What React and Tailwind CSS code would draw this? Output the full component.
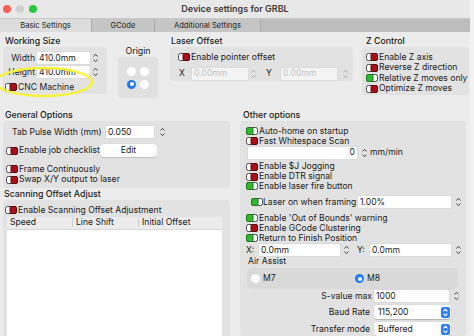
import React from 'react';

const FONT = { fontFamily: 'Inter, "Noto Sans", "Liberation Sans", sans-serif' };

function Toggle({ on }) {
  return (
    <svg width="12" height="8" viewBox="0 0 12 8" className="shrink-0">
      <rect x="0.5" y="0.5" width="11" height="7" rx="2" fill="#fff" stroke="#4a4a4a" />
      {on ? (
        <rect x="0.5" y="0.5" width="6.5" height="7" rx="1.5" fill="#2fb82f" stroke="#1f7a1f" />
      ) : (
        <rect x="5" y="0.5" width="6.5" height="7" rx="1.5" fill="#a8111a" stroke="#5a0a0d" />
      )}
    </svg>
  );
}

function Stepper({ faded }) {
  return (
    <svg width="7" height="12" viewBox="0 0 7 12" className="shrink-0" opacity={faded ? 0.35 : 1}>
      <polyline points="1.5,4.5 3.5,2.3 5.5,4.5" fill="none" stroke="#444" strokeWidth="1" />
      <polyline points="1.5,7.5 3.5,9.7 5.5,7.5" fill="none" stroke="#444" strokeWidth="1" />
    </svg>
  );
}

function BlueStepper() {
  return (
    <svg width="9" height="11" viewBox="0 0 9 11" className="shrink-0">
      <rect x="0" y="0" width="9" height="11" rx="2" fill="#2f7ef6" />
      <polyline points="2.5,4.3 4.5,2.3 6.5,4.3" fill="none" stroke="#fff" strokeWidth="1.1" />
      <polyline points="2.5,6.7 4.5,8.7 6.5,6.7" fill="none" stroke="#fff" strokeWidth="1.1" />
    </svg>
  );
}

function Check({ on, label, className = '' }) {
  return (
    <div className={`flex items-center h-[10.5px] gap-[1px] ${className}`}>
      <Toggle on={on} />
      <span className="whitespace-nowrap leading-none">{label}</span>
    </div>
  );
}

function Field({ value, className = '', faded, right }) {
  return (
    <div
      className={`h-[12px] flex items-center px-[2px] leading-none shadow-[0_0_0_0.5px_#d4d4d4] ${right ? 'justify-end' : ''} ${faded ? 'text-[#c2c2c2] bg-[#f4f4f4]' : 'bg-white'} ${className}`}
    >
      {value}
    </div>
  );
}

function Header({ children, className = '' }) {
  return <div className={`h-[12px] flex items-center font-medium text-[8.8px] leading-none text-[#1a1a1a] ${className}`}>{children}</div>;
}

export default function App() {
  return (
    <div className="relative w-[474px] h-[336px] overflow-hidden bg-[#f2f2f2] text-[8.6px] text-[#1a1a1a]" style={FONT}>
      <div className="w-[470px] h-[336px] bg-[#ececec]">
        {/* Title bar */}
        <div className="relative h-[18px] flex items-center bg-[#e8e8e8]">
          <div className="flex gap-[5px] pl-[3px]">
            <span className="w-[8px] h-[8px] rounded-full bg-[#fd5f57]" />
            <span className="w-[8px] h-[8px] rounded-full bg-[#cfcfcf]" />
            <span className="w-[8px] h-[8px] rounded-full bg-[#2ac73f]" />
          </div>
          <div className="absolute inset-0 flex items-center justify-center font-semibold text-[9px] text-[#3a3a3a]">
            Device settings for GRBL
          </div>
        </div>

        {/* Tabs */}
        <div className="h-[14px] flex bg-[#bdbdbd] border-t border-[#c9c9c9] text-[7.6px] leading-none">
          <div className="w-[91px] flex items-center justify-center bg-[#dddddd]">Basic Settings</div>
          <div className="w-[1px] bg-[#a9a9a9]" />
          <div className="w-[62px] flex items-center justify-center bg-[#c5c5c5]">GCode</div>
          <div className="w-[1px] bg-[#a9a9a9]" />
          <div className="w-[105px] flex items-center justify-center bg-[#c5c5c5]">Additional Settings</div>
          <div className="w-[1px] bg-[#a9a9a9]" />
        </div>

        {/* Top row */}
        <div className="flex pt-[3px]">
          {/* Working Size */}
          <div className="ml-[3px] w-[104px]">
            <Header className="pl-[2px]">Working Size</Header>
            <div className="h-[47px] rounded-[4px] bg-[#e2e2e2] flex flex-col pt-[5px] gap-[2px]">
              <div className="flex items-center h-[12px]">
                <span className="w-[34px] text-right pr-[2px]">Width</span>
                <Field value="410.0mm" className="w-[53px]" />
                <div className="ml-[2px]"><Stepper /></div>
              </div>
              <div className="flex items-center h-[12px]">
                <span className="w-[34px] text-right pr-[2px]">Height</span>
                <Field value="410.0mm" className="w-[53px]" />
                <div className="ml-[2px]"><Stepper /></div>
              </div>
              <Check on={false} label="CNC Machine" className="ml-[2px] mt-[2px]" />
            </div>
          </div>

          {/* Origin */}
          <div className="ml-[11px] w-[40px] flex flex-col">
            <div className="h-[12px] mt-[10px] flex items-center justify-center leading-none text-[8.8px]">Origin</div>
            <div className="h-[41px] rounded-[4px] bg-[#e0e0e0] grid grid-cols-2 content-center justify-center gap-x-[3px] gap-y-[4px] px-[9px]">
              <span className="w-[9px] h-[9px] rounded-full bg-white" />
              <span className="w-[9px] h-[9px] rounded-full bg-white" />
              <span className="w-[9px] h-[9px] rounded-full bg-[#1f7bf2] flex items-center justify-center">
                <span className="w-[4px] h-[4px] rounded-full bg-white" />
              </span>
              <span className="w-[9px] h-[9px] rounded-full bg-white" />
            </div>
          </div>

          {/* Laser Offset */}
          <div className="ml-[12px] w-[183px]">
            <Header className="pl-[1px]">Laser Offset</Header>
            <div className="h-[34px] rounded-[4px] bg-[#e2e2e2] flex flex-col pt-[5px] gap-[5px]">
              <Check on={false} label="Enable pointer offset" className="ml-[8px]" />
              <div className="flex items-center h-[12px]">
                <span className="w-[22px] text-center pl-[2px]">X</span>
                <Field value="0.00mm" faded className="w-[56px]" />
                <div className="ml-[2px]"><Stepper faded /></div>
                <span className="w-[24px] text-center">Y</span>
                <Field value="0.00mm" faded className="w-[56px]" />
                <div className="ml-[5px]"><Stepper faded /></div>
              </div>
            </div>
          </div>

          {/* Z Control */}
          <div className="ml-[9px] w-[107px]">
            <Header className="pl-[4px]">Z Control</Header>
            <div className="h-[48px] rounded-[4px] bg-[#e2e2e2] flex flex-col pt-[5px] pl-[4px]">
              <Check on={false} label="Enable Z axis" />
              <Check on={false} label="Reverse Z direction" />
              <Check on label="Relative Z moves only" />
              <Check on={false} label="Optimize Z moves" />
            </div>
          </div>
        </div>

        {/* Lower section */}
        <div className="flex mt-[11px]">
          {/* Left column */}
          <div className="ml-[3px] w-[227px] flex flex-col">
            <Header className="pl-[2px]">General Options</Header>
            <div className="h-[67px] rounded-[4px] bg-[#e2e2e2] flex flex-col pt-[5px]">
              <div className="flex items-center h-[12px]">
                <span className="ml-[9px] w-[94px] whitespace-nowrap">Tab Pulse Width (mm)</span>
                <Field value="0.050" className="w-[48px]" />
                <div className="ml-[5px]"><Stepper /></div>
              </div>
              <div className="flex items-center h-[13px] mt-[6px] ml-[3px]">
                <Toggle on={false} />
                <span className="w-[82px] pl-[1px] whitespace-nowrap">Enable job checklist</span>
                <div className="w-[57px] h-[13px] rounded-[4px] bg-white flex items-center justify-center shadow-[0_0.5px_1px_rgba(0,0,0,0.15)]">Edit</div>
              </div>
              <Check on={false} label="Frame Continuously" className="ml-[3px] mt-[7px]" />
              <Check on={false} label="Swap X/Y output to laser" className="ml-[3px]" />
            </div>

            <Header className="pl-[1px]">Scanning Offset Adjust</Header>
            <div className="h-[140px] rounded-[4px] bg-[#e2e2e2] flex flex-col pt-[5px]">
              <Check on={false} label="Enable Scanning Offset Adjustment" className="ml-[2px]" />
              <div className="ml-[4px] w-[215px] mt-[1px] flex-1 bg-white flex flex-col">
                <div className="h-[13px] flex items-center bg-[#ececec] border-b border-[#d8d8d8] leading-none">
                  <span className="w-[66px] pl-[3px] border-r border-[#cfcfcf]">Speed</span>
                  <span className="w-[66px] pl-[3px] border-r border-[#cfcfcf]">Line Shift</span>
                  <span className="pl-[3px]">Initial Offset</span>
                </div>
              </div>
            </div>
          </div>

          {/* Right column: Other options */}
          <div className="ml-[10px] w-[226px] flex flex-col">
            <Header className="pl-[3px]">Other options</Header>
            <div className="h-[215px] rounded-[4px] bg-[#e2e2e2] flex flex-col pt-[5px] pl-[6px]">
              <Check on label="Auto-home on startup" />
              <Check on={false} label="Fast Whitespace Scan" />
              <div className="flex items-center h-[12px] mt-[1px] ml-[2px]">
                <Field value="0" right className="w-[109px]" />
                <div className="ml-[4px]"><Stepper /></div>
                <span className="ml-[2px]">mm/min</span>
              </div>
              <Check on={false} label="Enable $J Jogging" className="mt-[3px]" />
              <Check on={false} label="Enable DTR signal" />
              <Check on label="Enable laser fire button" />
              <div className="flex items-center h-[12px] mt-[5px] ml-[5px]">
                <Toggle on />
                <span className="w-[95px] whitespace-nowrap">Laser on when framing</span>
                <Field value="1.00%" className="w-[93px]" />
                <div className="ml-[4px]"><Stepper /></div>
              </div>
              <Check on label="Enable 'Out of Bounds' warning" className="mt-[5px]" />
              <Check on={false} label="Enable GCode Clustering" />
              <Check on label="Return to Finish Position" />
              <div className="flex items-center h-[12px] mt-[1px]">
                <span className="w-[13px]">X:</span>
                <Field value="0.0mm" className="w-[81px]" />
                <div className="ml-[3px]"><Stepper /></div>
                <span className="ml-[7px] w-[13px]">Y:</span>
                <Field value="0.0mm" className="w-[81px]" />
                <div className="ml-[4px]"><Stepper /></div>
              </div>
              <div className="h-[11px] flex items-center ml-[2px] leading-none">Air Assist</div>
              <div className="w-[211px] h-[22px] ml-[1px] mt-[2px] rounded-[5px] bg-[#d9d9d9] flex items-center">
                <span className="ml-[4px] w-[9px] h-[9px] rounded-full bg-white" />
                <span className="ml-[3px] w-[92px]">M7</span>
                <span className="w-[9px] h-[9px] rounded-full bg-[#1f7bf2] flex items-center justify-center">
                  <span className="w-[4px] h-[4px] rounded-full bg-white" />
                </span>
                <span className="ml-[3px]">M8</span>
              </div>
              <div className="flex items-center h-[12px] mt-[1px]">
                <span className="w-[128px] text-right pr-[2px]">S-value max</span>
                <Field value="1000" className="w-[75px]" />
                <div className="ml-[4px]"><Stepper /></div>
              </div>
              <div className="flex items-center h-[14px] mt-[3px]">
                <span className="w-[128px] text-right pr-[4px]">Baud Rate</span>
                <div className="w-[77px] h-[14px] bg-white rounded-[3px] flex items-center pl-[4px] pr-[1px] shadow-[0_0.5px_1px_rgba(0,0,0,0.2)]">
                  <span className="flex-1">115,200</span>
                  <BlueStepper />
                </div>
              </div>
              <div className="flex items-center h-[14px] mt-[3px]">
                <span className="w-[128px] text-right pr-[4px]">Transfer mode</span>
                <div className="w-[77px] h-[14px] bg-white rounded-[3px] flex items-center pl-[4px] pr-[1px] shadow-[0_0.5px_1px_rgba(0,0,0,0.2)]">
                  <span className="flex-1">Buffered</span>
                  <BlueStepper />
                </div>
              </div>
            </div>
          </div>
        </div>
      </div>

      {/* Yellow annotation ellipse around CNC Machine */}
      <svg className="absolute left-0 top-0 pointer-events-none" width="474" height="336">
        <ellipse cx="44" cy="82" rx="48" ry="14" fill="none" stroke="#f6f23a" strokeWidth="2.5" />
      </svg>
    </div>
  );
}
